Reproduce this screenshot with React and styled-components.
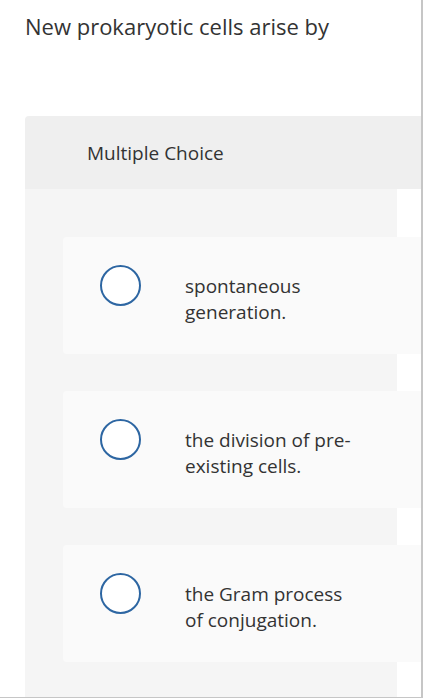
import React from "react";
import styled, { createGlobalStyle } from "styled-components";

const GlobalStyle = createGlobalStyle`
  html, body {
    margin: 0;
    padding: 0;
    background: #fff;
  }
  body {
    font-family: "Open Sans", "Liberation Sans", Arial, sans-serif;
    color: #333;
  }
`;

const Frame = styled.div`
  width: 421px;
  height: 697px;
  border-right: 2px solid #c6c6c6;
  border-bottom: 1px solid #c6c6c6;
  overflow: hidden;
  background: #fff;
`;

const Prompt = styled.p`
  margin: 0;
  padding: 11px 0 0 25px;
  font-size: 22px;
  line-height: 30px;
  color: #333;
`;

const Panel = styled.div`
  margin: 75px 0 0 25px;
  width: 396px;
`;

const Header = styled.div`
  box-sizing: border-box;
  height: 73px;
  padding: 24px 0 0 62px;
  background: #efefef;
  border-top-left-radius: 4px;
  font-size: 19px;
  line-height: 26px;
`;

const Body = styled.div`
  width: 372px;
  padding: 48px 0 40px;
  background: #f5f5f5;
  display: flex;
  flex-direction: column;
  gap: 37px;
`;

const Option = styled.div`
  box-sizing: border-box;
  width: 359px;
  height: 117px;
  margin-left: 38px;
  padding: 28px 0 0 37px;
  background: #fafafa;
  border-radius: 4px 0 0 4px;
  display: flex;
  align-items: flex-start;
`;

const Radio = styled.span`
  box-sizing: border-box;
  flex: none;
  width: 41px;
  height: 41px;
  border: 2px solid #2d66a2;
  border-radius: 50%;
  background: #fff;
`;

const Label = styled.div`
  margin: 8px 0 0 44px;
  width: 180px;
  font-size: 19px;
  line-height: 26px;
  color: #333;
`;

const choices = [
  ["spontaneous", "generation."],
  ["the division of pre-", "existing cells."],
  ["the Gram process", "of conjugation."],
];

export default function App() {
  return (
    <>
      <GlobalStyle />
      <Frame>
        <Prompt>New prokaryotic cells arise by</Prompt>
        <Panel>
          <Header>Multiple Choice</Header>
          <Body>
            {choices.map((lines, i) => (
              <Option key={i}>
                <Radio />
                <Label>
                  {lines[0]}
                  <br />
                  {lines[1]}
                </Label>
              </Option>
            ))}
          </Body>
        </Panel>
      </Frame>
    </>
  );
}
